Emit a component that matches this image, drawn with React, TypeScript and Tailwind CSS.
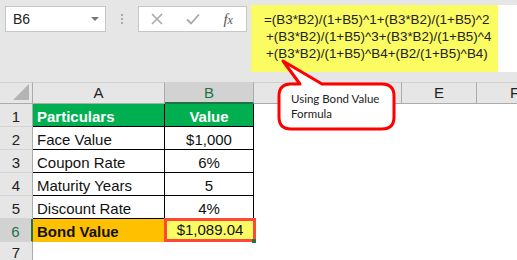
import React from "react";

const cols = "grid-cols-[33px_132px_89px_74px_74px_75px_1fr]";

const rows = [
  { n: 2, label: "Face Value", value: "$1,000" },
  { n: 3, label: "Coupon Rate", value: "6%" },
  { n: 4, label: "Maturity Years", value: "5" },
  { n: 5, label: "Discount Rate", value: "4%" },
];

function RowHead({ n, active, top }: { n: number; active?: boolean; top?: boolean }) {
  return (
    <div
      className={
        "flex justify-center leading-[19px] border-b border-[#d4d4d4] text-[15px] " +
        (top ? "items-start pt-[1px] " : "items-end ") +
        (active
          ? "bg-[#d2d2d2] text-[#217346] border-r-2 border-r-[#217346]"
          : "bg-[#e6e6e6] text-[#222] border-r border-r-[#ababab]")
      }
    >
      {n}
    </div>
  );
}

function Blank() {
  return <div className="bg-white" />;
}

export default function App() {
  return (
    <div
      className="relative w-[517px] h-[260px] overflow-hidden bg-white"
      style={{ fontFamily: "'Liberation Sans', Arial, sans-serif" }}
    >
      {/* toolbar / formula bar */}
      <div className="flex h-[82px] bg-[#e6e6e6] pt-[5px]">
        <div className="ml-[5px] mt-[1px] flex h-[26px] w-[101px] items-center justify-between border border-[#c6c6c6] bg-white pl-[7px] pr-[6px]">
          <span className="text-[14px] text-[#222]">B6</span>
          <span className="h-0 w-0 border-x-[4px] border-t-[4px] border-x-transparent border-t-[#777]" />
        </div>
        <div className="flex w-[32px] flex-col items-center justify-center gap-[2px] h-[28px]">
          <span className="h-[2px] w-[2px] bg-[#aaa]" />
          <span className="h-[2px] w-[2px] bg-[#aaa]" />
          <span className="h-[2px] w-[2px] bg-[#aaa]" />
        </div>
        <div className="mt-[1px] flex h-[26px] w-[109px] items-center border border-[#c6c6c6] bg-white">
          <div className="flex w-[36px] justify-center">
            <svg width="12" height="12" viewBox="0 0 12 12">
              <path d="M1 1L11 11M11 1L1 11" stroke="#a8a8a8" strokeWidth="1.6" />
            </svg>
          </div>
          <div className="flex w-[36px] justify-center">
            <svg width="14" height="12" viewBox="0 0 14 12">
              <path d="M1 6.5L5 10.5L13 1.5" stroke="#a8a8a8" strokeWidth="1.8" fill="none" />
            </svg>
          </div>
          <div className="flex w-[36px] justify-center">
            <span
              className="text-[15px] italic text-[#555]"
              style={{ fontFamily: "'Liberation Serif', serif" }}
            >
              f<span className="text-[12px]">x</span>
            </span>
          </div>
        </div>
        <div className="ml-[4px] flex h-[67px] flex-1">
          <div className="w-[247px] bg-[#fbfb62] pl-[13px] pt-[6px] text-[13.4px] leading-[17px] text-[#222]">
            <div>=(B3*B2)/(1+B5)^1+(B3*B2)/(1+B5)^2</div>
            <div className="pl-[2px]">+(B3*B2)/(1+B5)^3+(B3*B2)/(1+B5)^4</div>
            <div className="pl-[2px]">+(B3*B2)/(1+B5)^B4+(B2/(1+B5)^B4)</div>
          </div>
          <div className="flex-1 bg-white" />
        </div>
      </div>

      {/* sheet */}
      <div className={"grid " + cols + " grid-rows-[22px_23px_23px_23px_23px_23px_23px_23px]"}>
        {/* column headers */}
        <div className="relative border-t border-[#d0d0d0] border-r border-r-[#ababab] border-b border-b-[#ababab] bg-[#e6e6e6]">
          <svg className="absolute bottom-[3px] right-[3px]" width="16" height="16" viewBox="0 0 16 16">
            <path d="M16 0L16 16L0 16Z" fill="#b4b4b4" />
          </svg>
        </div>
        <div className="flex items-center justify-center pt-[1px] border-t border-[#d0d0d0] border-r border-r-[#ababab] border-b border-b-[#ababab] bg-[#e6e6e6] text-[15px] text-[#222]">
          A
        </div>
        <div className="flex items-center justify-center pt-[1px] border-t border-[#d0d0d0] border-r border-r-[#ababab] border-b-2 border-b-[#217346] bg-[#d2d2d2] text-[15px] text-[#217346]">
          B
        </div>
        <div className="border-t border-[#d0d0d0] border-r border-r-[#ababab] border-b border-b-[#ababab] bg-[#e6e6e6]" />
        <div className="border-t border-[#d0d0d0] border-r border-r-[#ababab] border-b border-b-[#ababab] bg-[#e6e6e6]" />
        <div className="flex items-center justify-center pt-[1px] border-t border-[#d0d0d0] border-r border-r-[#ababab] border-b border-b-[#ababab] bg-[#e6e6e6] text-[15px] text-[#222]">
          E
        </div>
        <div className="flex items-center justify-start pt-[1px] pl-[33px] border-t border-[#d0d0d0] border-b border-b-[#ababab] bg-[#e6e6e6] text-[15px] text-[#222]">
          F
        </div>

        {/* row 1 */}
        <RowHead n={1} />
        <div className="flex items-end leading-[18px] pl-[4px] bg-[#00b050] border-r border-b border-black text-[15px] font-bold text-white">
          Particulars
        </div>
        <div className="flex items-end justify-center leading-[18px] bg-[#00b050] border-r border-b border-black text-[15px] font-bold text-white">
          Value
        </div>
        <Blank />
        <Blank />
        <Blank />
        <Blank />

        {rows.map((r) => (
          <React.Fragment key={r.n}>
            <RowHead n={r.n} />
            <div className="flex items-end leading-[18px] pl-[4px] border-r border-b border-black text-[15px] text-[#111]">
              {r.label}
            </div>
            <div className="flex items-end justify-center leading-[18px] border-r border-b border-black text-[15px] text-[#111]">
              {r.value}
            </div>
            <Blank />
            <Blank />
            <Blank />
            <Blank />
          </React.Fragment>
        ))}

        {/* row 6 */}
        <RowHead n={6} active />
        <div className="flex items-end leading-[18px] pb-[1px] pl-[4px] bg-[#ffc000] text-[15px] font-bold text-[#111]">
          Bond Value
        </div>
        <div className="relative -ml-[1px] -mt-[1px] -mr-[2px] flex items-end justify-center leading-[18px] border-[3px] border-[#ff4838] bg-[#fbfb62] text-[15px] text-[#111]">
          $1,089.04
          <span className="absolute -bottom-[4px] -right-[3px] h-[4px] w-[4px] bg-[#217346]" />
        </div>
        <Blank />
        <Blank />
        <Blank />
        <Blank />

        {/* row 7 */}
        <RowHead n={7} top />
        <Blank />
        <Blank />
        <Blank />
        <Blank />
        <Blank />
        <Blank />
      </div>

      {/* callout */}
      <svg className="absolute left-0 top-0" width="517" height="260" viewBox="0 0 517 260">
        <path
          d="M291 84 L300 84 L283 61 L322 84 L382 84 Q394 84 394 96 L394 117 Q394 129 382 129 L291 129 Q279 129 279 117 L279 96 Q279 84 291 84 Z"
          fill="white"
          stroke="#ff0000"
          strokeWidth="3"
          strokeLinejoin="round"
        />
      </svg>
      <div
        className="absolute left-[291px] top-[91px] text-[11.5px] leading-[15px] text-[#222]"
        style={{ fontFamily: "Lato, 'Liberation Sans', sans-serif" }}
      >
        <div>Using Bond Value</div>
        <div>Formula</div>
      </div>
    </div>
  );
}
